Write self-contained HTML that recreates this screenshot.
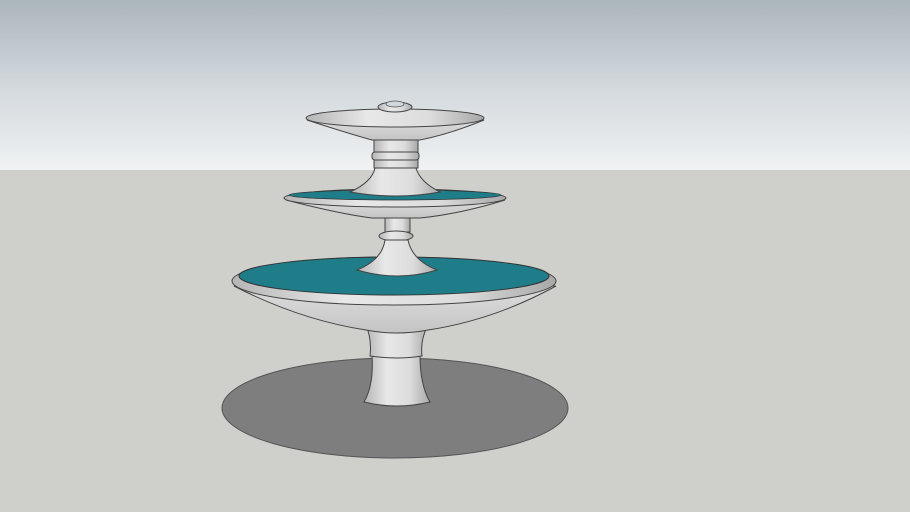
<!DOCTYPE html>
<html><head><style>html,body{margin:0;padding:0;}body{width:910px;height:512px;overflow:hidden;}</style></head>
<body>
<svg width="910" height="512" viewBox="0 0 910 512" xmlns="http://www.w3.org/2000/svg">
<defs>
<linearGradient id="sky" x1="0" y1="0" x2="0" y2="1">
<stop offset="0" stop-color="#abb5bc"/><stop offset="0.5" stop-color="#d2d8dc"/><stop offset="1" stop-color="#f0f2f3"/>
</linearGradient>
<linearGradient id="stone" x1="0" y1="0" x2="1" y2="0">
<stop offset="0" stop-color="#b5b5b5"/><stop offset="0.35" stop-color="#e8e8e8"/><stop offset="0.7" stop-color="#dcdcdc"/><stop offset="1" stop-color="#a8a8a8"/>
</linearGradient>
<linearGradient id="under" x1="0" y1="0" x2="0" y2="1">
<stop offset="0" stop-color="#dedede"/><stop offset="1" stop-color="#c4c4c4"/>
</linearGradient>
</defs>
<rect width="910" height="170" fill="url(#sky)"/>
<rect y="170" width="910" height="342" fill="#cfcfcb"/>
<ellipse cx="395" cy="408" rx="173" ry="50" fill="#7e7e7e" stroke="#555" stroke-width="1"/>
<path d="M372 355 L420 355 Q420 385 430 402 Q397 410 364 402 Q374 385 372 355 Z" fill="url(#stone)" stroke="#444" stroke-width="1"/>
<path d="M366 325 L428 325 Q420 340 422 356 Q397 360 370 356 Q372 340 366 325 Z" fill="url(#stone)" stroke="#444" stroke-width="1"/>
<path d="M234 286 Q300 320 366 330 Q397 336 428 330 Q494 320 556 286 Z" fill="url(#under)" stroke="#444" stroke-width="1"/>
<ellipse cx="394" cy="281" rx="162" ry="24" fill="url(#stone)" stroke="#444" stroke-width="1"/>
<ellipse cx="394" cy="276" rx="155" ry="19" fill="#1f7d8a" stroke="#333" stroke-width="1"/>
<path d="M385 215 L410 215 L410 232 L385 232 Z" fill="url(#stone)" stroke="#444"/>
<ellipse cx="396" cy="236" rx="17" ry="5" fill="url(#stone)" stroke="#444"/>
<path d="M385 240 L408 240 Q412 260 437 270 Q398 282 357 270 Q382 260 385 240 Z" fill="url(#stone)" stroke="#444" stroke-width="1"/>
<path d="M286 200 Q340 214 372 218 L420 218 Q460 214 505 200 Z" fill="url(#under)" stroke="#444"/>
<ellipse cx="395" cy="198" rx="111" ry="9" fill="url(#stone)" stroke="#444"/>
<ellipse cx="395" cy="195" rx="106" ry="5" fill="#1f7d8a" stroke="#333" stroke-width="0.8"/>
<path d="M375 168 L416 168 Q420 182 440 192 Q397 200 350 192 Q372 182 375 168 Z" fill="url(#stone)" stroke="#444"/>
<path d="M374 138 L418 138 L418 168 L374 168 Z" fill="url(#stone)" stroke="#444"/>
<rect x="372" y="152" width="47" height="8" rx="3" fill="url(#stone)" stroke="#444"/>
<path d="M307 120 Q350 134 372 140 L420 140 Q450 134 484 120 Z" fill="url(#under)" stroke="#444"/>
<ellipse cx="395" cy="118" rx="89" ry="9" fill="url(#stone)" stroke="#444"/>
<ellipse cx="395" cy="107" rx="17" ry="5" fill="url(#stone)" stroke="#444"/>
<ellipse cx="395" cy="104" rx="9" ry="3" fill="#cfd8dd" stroke="#555" stroke-width="0.8"/>
</svg>
</body></html>
